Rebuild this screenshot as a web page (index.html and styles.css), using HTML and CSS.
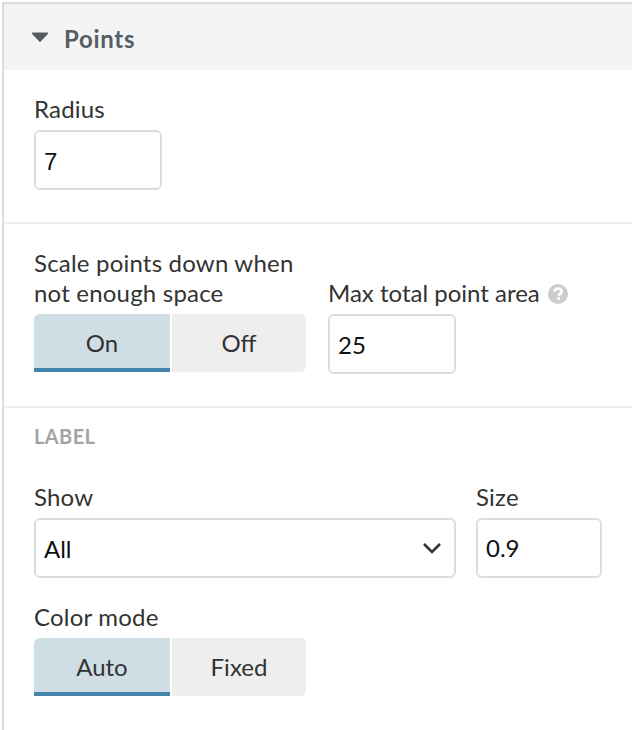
FILE: index.html
```html
<!DOCTYPE html>
<html lang="en">
<head>
<meta charset="utf-8">
<title>Points</title>
<link rel="stylesheet" href="styles.css">
</head>
<body>
<div class="panel">
  <div class="header">
    <svg class="caret" width="18" height="12" viewBox="0 0 18 12"><path d="M1.5 1.5h15a.8.8 0 0 1 .6 1.3l-7.4 7.8a1 1 0 0 1-1.4 0L.9 2.8a.8.8 0 0 1 .6-1.3z"/></svg>
    <span class="title">Points</span>
  </div>
  <section class="section radius">
    <div class="label">Radius</div>
    <div class="input arial">7</div>
  </section>
  <section class="section scale">
    <div class="row">
      <div class="col">
        <div class="label wrap">Scale points down when<br>not enough space</div>
        <div class="toggle">
          <div class="tbtn on">On</div>
          <div class="tbtn">Off</div>
        </div>
      </div>
      <div class="col offset">
        <div class="label tight">Max total point area
          <svg class="help" width="20" height="20" viewBox="0 0 20 20"><circle cx="10" cy="10" r="10" fill="#ccc"/><path d="M6.5 7.6C6.700 5.600 8.200 4.500 10 4.500c2.100 0 3.600 1.200 3.600 3 0 1.400-.9 2.100-1.800 2.700-.8.500-1 .8-1 1.700" fill="none" stroke="#fff" stroke-width="2.600"/><rect x="9.200" y="13.300" width="2.800" height="2.600" fill="#fff"/></svg>
        </div>
        <div class="input">25</div>
      </div>
    </div>
  </section>
  <section class="section labels">
    <div class="heading">LABEL</div>
    <div class="row wide">
      <div class="col">
        <div class="label">Show</div>
        <div class="select">
          <span>All</span>
          <svg width="20" height="12" viewBox="0 0 20 12"><path d="M2 2l8 8 8-8" fill="none" stroke="#333" stroke-width="2.600"/></svg>
        </div>
      </div>
      <div class="col">
        <div class="label">Size</div>
        <div class="input size">0.9</div>
      </div>
    </div>
    <div class="label mode">Color mode</div>
    <div class="toggle">
      <div class="tbtn on">Auto</div>
      <div class="tbtn">Fixed</div>
    </div>
  </section>
</div>
</body>
</html>
```
FILE: styles.css
```css
* { box-sizing: border-box; }
html, body { margin: 0; background: #fff; }
body {
  width: 632px;
  height: 730px;
  overflow: hidden;
  font-family: Lato, "Liberation Sans", sans-serif;
  font-size: 24px;
  color: #333;
}
.panel {
  margin-top: 2px;
  margin-left: 2px;
  height: 728px;
  border-left: 2px solid #ddd;
  border-top: 2px solid #ddd;
}
.header {
  height: 66px;
  background: #f4f4f4;
  display: flex;
  align-items: center;
  padding-left: 27px;
  gap: 15px;
}
.caret { fill: #555d64; }
.title { font-size: 24px; font-weight: 700; color: #555d64; letter-spacing: 0.7px; margin-top: 2px; }
.section { padding: 0 30px; border-bottom: 2px solid #eee; }
.section.radius { height: 154px; padding-top: 25px; }
.section.scale { height: 184px; padding-top: 25px; }
.section.labels { border-bottom: 0; padding-top: 16px; }
.label { height: 30px; line-height: 28px; white-space: nowrap; margin-bottom: 5px; letter-spacing: 0.2px; }
.label.wrap { height: 60px; line-height: 30px; margin-top: -1px; margin-bottom: 6px; }
.label.tight { letter-spacing: 0; }
.row { display: flex; gap: 22px; }
.row.wide { gap: 20px; }
.col { display: flex; flex-direction: column; }
.col.offset { padding-top: 30px; }
.input {
  width: 128px;
  height: 60px;
  border: 2px solid #ddd;
  border-radius: 6px;
  padding-left: 8px;
  line-height: 58px;
  color: #111;
}
.input.arial { font-family: "Liberation Sans", sans-serif; line-height: 60px; }
.input.size { width: 126px; line-height: 56px; }
.help { vertical-align: -2px; margin-left: 2px; }
.toggle { display: flex; gap: 2px; width: 272px; height: 58px; }
.tbtn {
  flex: 1;
  background: #eee;
  text-align: center;
  line-height: 58px;
  border-radius: 0 6px 6px 0;
}
.tbtn.on {
  flex: 0 0 136px;
  background: #cfdde5;
  border-bottom: 4px solid #4484ab;
  border-radius: 6px 0 0 0;
}
.heading { font-size: 20px; font-weight: 700; color: #a3a3a3; height: 24px; line-height: 24px; letter-spacing: 0.4px; margin-bottom: 35px; }
.select {
  width: 422px;
  height: 60px;
  border: 2px solid #ddd;
  border-radius: 6px;
  display: flex;
  align-items: center;
  justify-content: space-between;
  padding: 0 12px 0 8px;
  color: #111;
}
.label.mode { margin-top: 25px; }
```
